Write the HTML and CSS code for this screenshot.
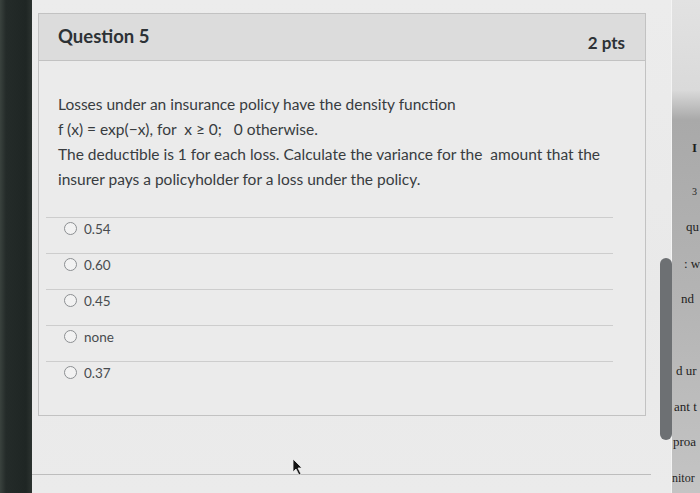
FILE: index.html
```html
<!DOCTYPE html>
<html>
<head>
<meta charset="utf-8">
<link rel="stylesheet" href="styles.css">
</head>
<body>
<div class="screen">
  <div class="bezel"></div>
  <div class="main">
    <div class="card">
      <div class="card-head">
        <span class="q-title">Question 5</span>
        <span class="q-pts">2 pts</span>
      </div>
      <div class="card-body">
        <p class="q-text">Losses under an insurance policy have the density function<br>f (x) = exp(−x), for &nbsp;x ≥ 0; &nbsp;&nbsp;0 otherwise.<br>The deductible is 1 for each loss. Calculate the variance for the &nbsp;amount that the<br>insurer pays a policyholder for a loss under the policy.</p>
        <ul class="answers">
          <li class="answer"><span class="radio"></span><span class="label">0.54</span></li>
          <li class="answer"><span class="radio"></span><span class="label">0.60</span></li>
          <li class="answer"><span class="radio"></span><span class="label">0.45</span></li>
          <li class="answer"><span class="radio"></span><span class="label">none</span></li>
          <li class="answer"><span class="radio"></span><span class="label">0.37</span></li>
        </ul>
      </div>
    </div>
    <div class="next-card"></div>
  </div>
  <div class="side">
    <div class="frag f1">I</div>
    <div class="frag f2">3</div>
    <div class="frag f3">qu</div>
    <div class="frag f4">: w</div>
    <div class="frag f5">nd</div>
    <div class="frag f6">d ur</div>
    <div class="frag f7">ant t</div>
    <div class="frag f8">proa</div>
    <div class="frag f9">nitor</div>
  </div>
  <div class="thumb"></div>
  <svg class="cursor" width="12" height="18" viewBox="0 0 12 18"><path d="M1 1 L1 14 L4 11 L7 17 L9 16 L6 10 L10 10 Z" fill="#111" stroke="#eee" stroke-width="0.8"/></svg>
</div>
</body>
</html>
```

FILE: styles.css
```css
html, body {
  margin: 0;
  padding: 0;
}
body {
  width: 700px;
  height: 493px;
  overflow: hidden;
  font-family: Lato, "Open Sans", sans-serif;
}
.screen {
  position: relative;
  display: flex;
  width: 700px;
  height: 493px;
  background: #e9e9e9;
}
.bezel {
  width: 32px;
  flex: none;
  background: linear-gradient(90deg, #3a423e 0px, #242b29 6px, #1f2624 26px, #2c3330 32px);
}
.main {
  flex: 1;
  display: flex;
  flex-direction: column;
  background: linear-gradient(180deg, #ececec 0%, #e9e9e9 60%, #ebebeb 100%);
}
.card {
  margin: 13px 0 0 6px;
  width: 606px;
  border: 1px solid #c2c2c2;
  background: #ebebeb;
}
.card-head {
  height: 46px;
  display: flex;
  align-items: center;
  justify-content: space-between;
  padding: 0 20px 0 19px;
  background: #dcdcdc;
  border-bottom: 1px solid #c2c2c2;
}
.q-title {
  font-size: 18.5px;
  font-weight: 700;
  color: #2d3236;
  margin-top: -2px;
}
.q-pts {
  font-size: 17px;
  font-weight: 700;
  color: #2d3236;
  margin-top: 10px;
}
.card-body {
  padding: 31px 32px 18px 7px;
}
.q-text {
  margin: 0 0 25px 12px;
  font-size: 15.5px;
  line-height: 25px;
  color: #383c3f;
  white-space: nowrap;
}
.answers {
  list-style: none;
  margin: 0;
  padding: 0;
}
.answer {
  height: 36px;
  border-top: 1px solid #cdcdcd;
  display: flex;
  align-items: flex-start;
  padding-top: 1px;
  box-sizing: border-box;
}
.radio {
  width: 11px;
  height: 11px;
  border: 1.5px solid #8c8f92;
  border-radius: 50%;
  margin: 3px 0 0 18px;
  background: #f2f2f2;
  flex: none;
}
.label {
  margin-left: 7px;
  font-size: 13.5px;
  line-height: 20px;
  color: #484c4f;
}
.next-card {
  margin-top: 58px;
  border-top: 1px solid #bdbdbd;
  margin-right: 20px;
}
.side {
  width: 28px;
  flex: none;
  position: relative;
  overflow: hidden;
  border-left: 1px solid #f4f4f4;
  background: linear-gradient(180deg, #e2e2e2 0px, #dadada 90px, #a9a9a9 120px, #b4b4b4 300px, #c4c4c4 493px);
  font-family: "Liberation Serif", "DejaVu Serif", serif;
  font-size: 13px;
  color: #1f1f1f;
}
.frag {
  position: absolute;
  left: 2px;
  white-space: nowrap;
}
.f1 { top: 140px; left: 20px; font-weight: 700; }
.f2 { top: 186px; left: 20px; font-size: 10px; }
.f3 { top: 219px; left: 14px; }
.f4 { top: 256px; left: 12px; }
.f5 { top: 291px; left: 9px; }
.f6 { top: 363px; left: 4px; }
.f7 { top: 399px; left: 2px; }
.f8 { top: 434px; left: 1px; }
.f9 { top: 471px; left: 0px; font-size: 12px; }
.thumb {
  position: absolute;
  left: 660px;
  top: 258px;
  width: 12px;
  height: 182px;
  border-radius: 6px;
  background: #6d7073;
}
.cursor {
  position: absolute;
  left: 292px;
  top: 458px;
}
```
